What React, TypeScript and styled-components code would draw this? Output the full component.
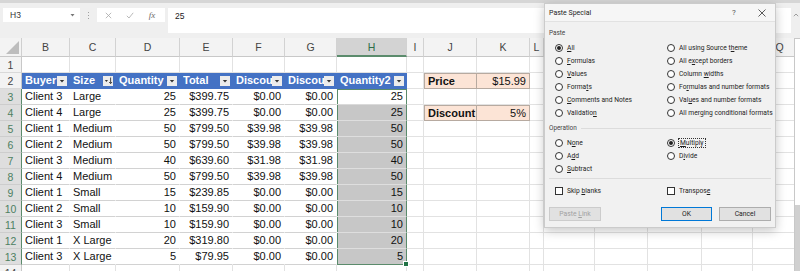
import React from "react";
import styled, { createGlobalStyle, css } from "styled-components";

const GlobalStyle = createGlobalStyle`
  html, body { margin: 0; padding: 0; background: #ffffff; }
  body { font-family: "Liberation Sans", Arial, sans-serif; }
`;

const COLUMNS = [
  { id: "B", w: 48 },
  { id: "C", w: 46 },
  { id: "D", w: 64 },
  { id: "E", w: 53 },
  { id: "F", w: 52 },
  { id: "G", w: 52 },
  { id: "H", w: 70 },
  { id: "I", w: 17 },
  { id: "J", w: 53 },
  { id: "K", w: 53 },
  { id: "L", w: 14 },
  { id: "M", w: 51 },
  { id: "N", w: 53 },
  { id: "O", w: 54 },
  { id: "P", w: 51 },
  { id: "Q", w: 54 },
];

const TABLE_HEAD = ["Buyer", "Size", "Quantity", "Total", "Discount", "Discount", "Quantity2"];

const DATA: [string, string, number, string, string, string][] = [
  ["Client 3", "Large", 25, "$399.75", "$0.00", "$0.00"],
  ["Client 4", "Large", 25, "$399.75", "$0.00", "$0.00"],
  ["Client 1", "Medium", 50, "$799.50", "$39.98", "$39.98"],
  ["Client 2", "Medium", 50, "$799.50", "$39.98", "$39.98"],
  ["Client 3", "Medium", 40, "$639.60", "$31.98", "$31.98"],
  ["Client 4", "Medium", 50, "$799.50", "$39.98", "$39.98"],
  ["Client 1", "Small", 15, "$239.85", "$0.00", "$0.00"],
  ["Client 2", "Small", 10, "$159.90", "$0.00", "$0.00"],
  ["Client 3", "Small", 10, "$159.90", "$0.00", "$0.00"],
  ["Client 1", "X Large", 20, "$319.80", "$0.00", "$0.00"],
  ["Client 3", "X Large", 5, "$79.95", "$0.00", "$0.00"],
];

const PASTE_LEFT = [
  { text: "All", k: 0, checked: true },
  { text: "Formulas", k: 0 },
  { text: "Values", k: 0 },
  { text: "Formats", k: 5 },
  { text: "Comments and Notes", k: 0 },
  { text: "Validation", k: 9 },
];

const PASTE_RIGHT = [
  { text: "All using Source theme", k: 18 },
  { text: "All except borders", k: 5 },
  { text: "Column widths", k: 7 },
  { text: "Formulas and number formats", k: 2 },
  { text: "Values and number formats", k: 3 },
  { text: "All merging conditional formats", k: 7 },
];

const SEL = "#5b8b6c";

// ---------- page ----------
const Page = styled.div`
  position: relative;
  width: 800px;
  height: 271px;
  overflow: hidden;
  background: #fff;
`;

const TopStrip = styled.div`
  height: 3px;
  background: #d6d6d6;
`;

const FormulaBar = styled.div`
  box-sizing: border-box;
  height: 35px;
  padding: 5px 0 0 3px;
  display: flex;
  align-items: flex-start;
  background: #efefef;
`;

const NameBox = styled.div`
  box-sizing: border-box;
  width: 77px;
  height: 14px;
  background: #fff;
  display: flex;
  align-items: center;
  justify-content: space-between;
  padding: 0 5px 0 7px;
  font-size: 8.5px;
  color: #333;
`;

const Grip = styled.div`
  width: 17px;
  height: 14px;
  display: flex;
  flex-direction: column;
  align-items: center;
  justify-content: center;
  gap: 2px;
`;

const GripDot = styled.span`
  width: 1px;
  height: 1px;
  background: #a0a0a0;
`;

const IconBox = styled.div`
  width: 68px;
  height: 14px;
  background: #fff;
  display: flex;
  align-items: center;
`;

const IconSlot = styled.div`
  width: 22px;
  height: 14px;
  display: flex;
  align-items: center;
  justify-content: center;
  color: #9b9b9b;
`;

const Fx = styled.span`
  font-family: "Liberation Serif", serif;
  font-style: italic;
  font-size: 9px;
  color: #6a6a6a;
`;

const FormulaInput = styled.div`
  flex: 1;
  box-sizing: border-box;
  margin-left: 3px;
  height: 25px;
  background: #fff;
  padding: 1px 7px;
  font-size: 8.5px;
  line-height: 14px;
  color: #222;
`;

const Collapse = styled.div`
  width: 9px;
  height: 14px;
  display: flex;
  align-items: center;
  justify-content: center;
`;

const Workspace = styled.div`
  display: flex;
  height: 233px;
`;

const SheetGrid = styled.div`
  flex: 1;
  overflow: hidden;
  display: grid;
  grid-template-columns: 22px ${COLUMNS.map((c) => c.w + "px").join(" ")};
  grid-template-rows: 19px;
  grid-auto-rows: 16px;
  align-content: start;
`;

const Corner = styled.div`
  box-sizing: border-box;
  background: #f3f3f3;
  border-right: 1px solid #cfcfcf;
  border-bottom: 1px solid #c8c8c8;
  display: flex;
  align-items: flex-end;
  justify-content: flex-end;
  padding: 0 2px 2px 0;
`;

const ColHead = styled.div<{ $selected?: boolean }>`
  box-sizing: border-box;
  background: ${(p) => (p.$selected ? "#d3d3d3" : "#f3f3f3")};
  color: ${(p) => (p.$selected ? "#2f6e47" : "#444")};
  border-right: 1px solid #d2d2d2;
  border-bottom: ${(p) => (p.$selected ? `2px solid ${SEL}` : "1px solid #c8c8c8")};
  font-size: 10.5px;
  display: flex;
  align-items: center;
  justify-content: center;
  overflow: hidden;
`;

const RowHead = styled.div<{ $selected?: boolean }>`
  box-sizing: border-box;
  background: ${(p) => (p.$selected ? "#dedede" : "#f3f3f3")};
  color: ${(p) => (p.$selected ? "#4d8061" : "#444")};
  border-right: 1px solid ${(p) => (p.$selected ? SEL : "#c8c8c8")};
  border-bottom: 1px solid ${(p) => (p.$selected ? "#cdcdcd" : "#d9d9d9")};
  font-size: 10.5px;
  display: flex;
  align-items: center;
  justify-content: center;
`;

type CellKind = "plain" | "table" | "head" | "active" | "sel" | "input";

const kindStyles: Record<CellKind, ReturnType<typeof css>> = {
  plain: css``,
  table: css`
    border-right-color: #fff;
    border-bottom-color: #d2d2d2;
  `,
  head: css`
    background: #4472c4;
    color: #fff;
    font-weight: bold;
    border-right-color: #4472c4;
    border-bottom-color: #4472c4;
    display: flex;
    align-items: center;
    padding-right: 2px;
  `,
  active: css`
    background: #fff;
    border-right-color: ${SEL};
    border-bottom-color: #dadada;
    box-shadow: inset 1px 0 0 ${SEL}, inset 0 1px 0 ${SEL};
  `,
  sel: css`
    background: #c7c7c7;
    border-right-color: ${SEL};
    border-bottom-color: #dedede;
    box-shadow: inset 1px 0 0 ${SEL};
  `,
  input: css`
    background: #fce4d6;
    border-top: 1px solid #b7aaa0;
    border-right-color: #b7aaa0;
    border-bottom-color: #b7aaa0;
    line-height: 14px;
  `,
};

const Cell = styled.div<{
  $kind: CellKind;
  $align?: "left" | "right";
  $bold?: boolean;
  $leftEdge?: boolean;
  $bottomEdge?: boolean;
}>`
  position: relative;
  box-sizing: border-box;
  padding: 0 3px 0 3px;
  font-size: 11px;
  line-height: 15px;
  color: #111;
  white-space: nowrap;
  overflow: hidden;
  text-align: ${(p) => p.$align ?? "left"};
  font-weight: ${(p) => (p.$bold ? "bold" : "normal")};
  border-right: 1px solid #e2e2e2;
  border-bottom: 1px solid #e2e2e2;
  ${(p) => kindStyles[p.$kind]}
  ${(p) => p.$leftEdge && "border-left: 1px solid #b7aaa0;"}
  ${(p) =>
    p.$bottomEdge &&
    css`
      overflow: visible;
      border-bottom-color: ${SEL};
    `}
`;

const HeadText = styled.span`
  flex: 1;
  overflow: hidden;
  white-space: nowrap;
`;

const FilterButton = styled.span`
  flex: none;
  width: 10px;
  height: 10px;
  background: #ececec;
  display: flex;
  align-items: center;
  justify-content: center;
`;

const FillHandle = styled.span`
  position: absolute;
  right: -3px;
  bottom: -3px;
  width: 4px;
  height: 4px;
  background: #217346;
  border: 1px solid #fff;
  z-index: 2;
`;

const VScroll = styled.div`
  width: 5px;
  display: flex;
  flex-direction: column;
  border-left: 1px solid #c8c8c8;
  background: #fff;
`;

const ScrollTrack = styled.div`
  flex: 1;
  border-top: 1px solid #c8c8c8;
`;

const ScrollThumb = styled.div`
  height: 66px;
  background: #d0d0d0;
`;

// ---------- dialog ----------
const Dialog = styled.div`
  position: absolute;
  left: 544px;
  top: 3px;
  width: 232px;
  box-sizing: border-box;
  background: #f1f1f1;
  border: 1px solid #cbcbcb;
  box-shadow: 0 3px 10px rgba(0, 0, 0, 0.22);
  font-family: Roboto, "Liberation Sans", sans-serif;
  font-size: 6.7px;
  color: #1e1e1e;
  z-index: 5;
`;

const TitleBar = styled.div`
  box-sizing: border-box;
  height: 18px;
  display: flex;
  align-items: center;
  padding: 0 9px 0 4px;
  border-bottom: 1px solid #e2e2e2;
  background: #f6f6f6;
`;

const Title = styled.div`
  flex: 1;
  font-size: 7px;
`;

const Help = styled.div`
  width: 10px;
  margin-right: 19px;
  text-align: center;
  font-size: 8px;
  color: #555;
`;

const DialogBody = styled.div`
  padding: 0 4px 6px;
`;

const SectionLabel = styled.div`
  margin-top: 6px;
  height: 10px;
  line-height: 10px;
  font-size: 6.4px;
  color: #444;
`;

const GroupHeader = styled.div`
  margin-top: 4px;
  height: 10px;
  display: flex;
  align-items: center;
  font-size: 6.4px;
  color: #444;
`;

const GroupLine = styled.div`
  flex: 1;
  margin-left: 4px;
  border-top: 1px solid #dcdcdc;
`;

const OptionGrid = styled.div<{ $rows: number }>`
  margin: 3px 0 0 6px;
  display: grid;
  grid-template-columns: 112px 1fr;
  grid-template-rows: repeat(${(p) => p.$rows}, 13px);
  grid-auto-flow: column;
`;

const Option = styled.div`
  display: flex;
  align-items: center;
  gap: 4px;
  white-space: nowrap;
  min-width: 0;
`;

const Radio = styled.span<{ $checked?: boolean }>`
  box-sizing: border-box;
  flex: none;
  width: 8px;
  height: 8px;
  border-radius: 50%;
  border: 1px solid #333;
  background: #fff;
  display: flex;
  align-items: center;
  justify-content: center;
  &::after {
    content: "";
    width: 4px;
    height: 4px;
    border-radius: 50%;
    background: #222;
    display: ${(p) => (p.$checked ? "block" : "none")};
  }
`;

const Check = styled.span`
  box-sizing: border-box;
  flex: none;
  width: 8px;
  height: 8px;
  border: 1px solid #333;
  background: #fff;
`;

const Focused = styled.span`
  outline: 1px dotted #333;
  outline-offset: 0;
  padding: 0 1px;
`;

const Separator = styled.div`
  margin-top: 3px;
  border-top: 1px solid #dcdcdc;
`;

const CheckRow = styled.div`
  margin: 5px 0 0 6px;
  height: 13px;
  display: grid;
  grid-template-columns: 112px 1fr;
`;

const ButtonRow = styled.div`
  margin-top: 10px;
  display: flex;
  gap: 7px;
`;

const Button = styled.div<{ $variant?: "default" | "primary" | "disabled"; $push?: boolean }>`
  box-sizing: border-box;
  width: ${(p) => (p.$variant === "primary" ? 51 : 52)}px;
  height: 14px;
  margin-left: ${(p) => (p.$push ? "auto" : "0")};
  display: flex;
  align-items: center;
  justify-content: center;
  background: #e1e1e1;
  border: 1px solid
    ${(p) => (p.$variant === "primary" ? "#0078d7" : p.$variant === "disabled" ? "#cccccc" : "#adadad")};
  color: ${(p) => (p.$variant === "disabled" ? "#a2a2a2" : "#1e1e1e")};
  font-size: 6.8px;
`;

const AccessLabel: React.FC<{ text: string; k: number }> = ({ text, k }) => (
  <span>
    {text.slice(0, k)}
    <u>{text.charAt(k)}</u>
    {text.slice(k + 1)}
  </span>
);

const FilterIcon: React.FC<{ sorted?: boolean }> = ({ sorted }) =>
  sorted ? (
    <svg width="9" height="9" viewBox="0 0 9 9">
      <path d="M0.8 4 L4 4 L2.4 6 Z" fill="#333" />
      <path d="M6.6 1.5 V7.5 M5.2 6 L6.6 7.6 L8 6" stroke="#333" strokeWidth="0.9" fill="none" />
    </svg>
  ) : (
    <svg width="8" height="8" viewBox="0 0 8 8">
      <path d="M1.8 3 L6.2 3 L4 5.6 Z" fill="#333" />
    </svg>
  );

const renderRow = (r: number) => {
  const cells: React.ReactNode[] = [];
  const inSel = r >= 3 && r <= 13;
  cells.push(
    <RowHead key="rh" $selected={inSel}>
      {r}
    </RowHead>
  );
  COLUMNS.forEach((col, ci) => {
    const key = col.id + r;
    if (r === 2 && ci <= 6) {
      cells.push(
        <Cell key={key} $kind="head">
          <HeadText>{TABLE_HEAD[ci]}</HeadText>
          <FilterButton>
            <FilterIcon sorted={ci === 1} />
          </FilterButton>
        </Cell>
      );
    } else if (inSel && ci <= 5) {
      const row = DATA[r - 3];
      cells.push(
        <Cell key={key} $kind="table" $align={ci >= 2 ? "right" : "left"}>
          {row[ci]}
        </Cell>
      );
    } else if (inSel && ci === 6) {
      cells.push(
        <Cell key={key} $kind={r === 3 ? "active" : "sel"} $align="right" $bottomEdge={r === 13}>
          {DATA[r - 3][2]}
          {r === 13 && <FillHandle />}
        </Cell>
      );
    } else if ((r === 2 || r === 4) && (col.id === "J" || col.id === "K")) {
      const isLabel = col.id === "J";
      const text = r === 2 ? (isLabel ? "Price" : "$15.99") : isLabel ? "Discount" : "5%";
      cells.push(
        <Cell key={key} $kind="input" $bold={isLabel} $leftEdge={isLabel} $align={isLabel ? "left" : "right"}>
          {text}
        </Cell>
      );
    } else {
      cells.push(<Cell key={key} $kind="plain" />);
    }
  });
  return cells;
};

const App: React.FC = () => {
  const rows = Array.from({ length: 14 }, (_, i) => i + 1);
  return (
    <Page>
      <GlobalStyle />
      <TopStrip />
      <FormulaBar>
        <NameBox>
          <span>H3</span>
          <svg width="5" height="4" viewBox="0 0 5 4">
            <path d="M0.5 1 L4.5 1 L2.5 3.4 Z" fill="#777" />
          </svg>
        </NameBox>
        <Grip>
          <GripDot />
          <GripDot />
          <GripDot />
        </Grip>
        <IconBox>
          <IconSlot>
            <svg width="7" height="7" viewBox="0 0 7 7">
              <path d="M0.8 0.8 L6.2 6.2 M6.2 0.8 L0.8 6.2" stroke="#a8a8a8" strokeWidth="0.8" />
            </svg>
          </IconSlot>
          <IconSlot>
            <svg width="8" height="7" viewBox="0 0 8 7">
              <path d="M0.8 3.8 L3 6 L7.2 0.8" stroke="#a8a8a8" strokeWidth="0.8" fill="none" />
            </svg>
          </IconSlot>
          <IconSlot>
            <Fx>fx</Fx>
          </IconSlot>
        </IconBox>
        <FormulaInput>25</FormulaInput>
        <Collapse>
          <svg width="6" height="4" viewBox="0 0 6 4">
            <path d="M0.8 3.2 L3 1 L5.2 3.2" stroke="#888" strokeWidth="0.8" fill="none" />
          </svg>
        </Collapse>
      </FormulaBar>
      <Workspace>
        <SheetGrid>
          <Corner>
            <svg width="13" height="13" viewBox="0 0 13 13">
              <path d="M13 0 L13 13 L0 13 Z" fill="#bdbdbd" />
            </svg>
          </Corner>
          {COLUMNS.map((c) => (
            <ColHead key={c.id} $selected={c.id === "H"}>
              {c.id}
            </ColHead>
          ))}
          {rows.map((r) => renderRow(r))}
        </SheetGrid>
        <VScroll>
          <ScrollTrack />
          <ScrollThumb />
        </VScroll>
      </Workspace>

      <Dialog>
        <TitleBar>
          <Title>Paste Special</Title>
          <Help>?</Help>
          <svg width="8" height="8" viewBox="0 0 8 8">
            <path d="M0.5 0.5 L7.5 7.5 M7.5 0.5 L0.5 7.5" stroke="#333" strokeWidth="0.8" />
          </svg>
        </TitleBar>
        <DialogBody>
          <SectionLabel>Paste</SectionLabel>
          <OptionGrid $rows={6}>
            {[...PASTE_LEFT, ...PASTE_RIGHT].map((o) => (
              <Option key={o.text}>
                <Radio $checked={"checked" in o && o.checked} />
                <AccessLabel text={o.text} k={o.k} />
              </Option>
            ))}
          </OptionGrid>
          <GroupHeader>
            Operation
            <GroupLine />
          </GroupHeader>
          <OptionGrid $rows={3}>
            <Option>
              <Radio />
              <AccessLabel text="None" k={1} />
            </Option>
            <Option>
              <Radio />
              <AccessLabel text="Add" k={1} />
            </Option>
            <Option>
              <Radio />
              <AccessLabel text="Subtract" k={0} />
            </Option>
            <Option>
              <Radio $checked />
              <Focused>
                <AccessLabel text="Multiply" k={0} />
              </Focused>
            </Option>
            <Option>
              <Radio />
              <AccessLabel text="Divide" k={1} />
            </Option>
          </OptionGrid>
          <Separator />
          <CheckRow>
            <Option>
              <Check />
              <AccessLabel text="Skip blanks" k={5} />
            </Option>
            <Option>
              <Check />
              <AccessLabel text="Transpose" k={8} />
            </Option>
          </CheckRow>
          <ButtonRow>
            <Button $variant="disabled">
              <AccessLabel text="Paste Link" k={6} />
            </Button>
            <Button $variant="primary" $push>
              OK
            </Button>
            <Button>Cancel</Button>
          </ButtonRow>
        </DialogBody>
      </Dialog>
    </Page>
  );
};

export default App;
